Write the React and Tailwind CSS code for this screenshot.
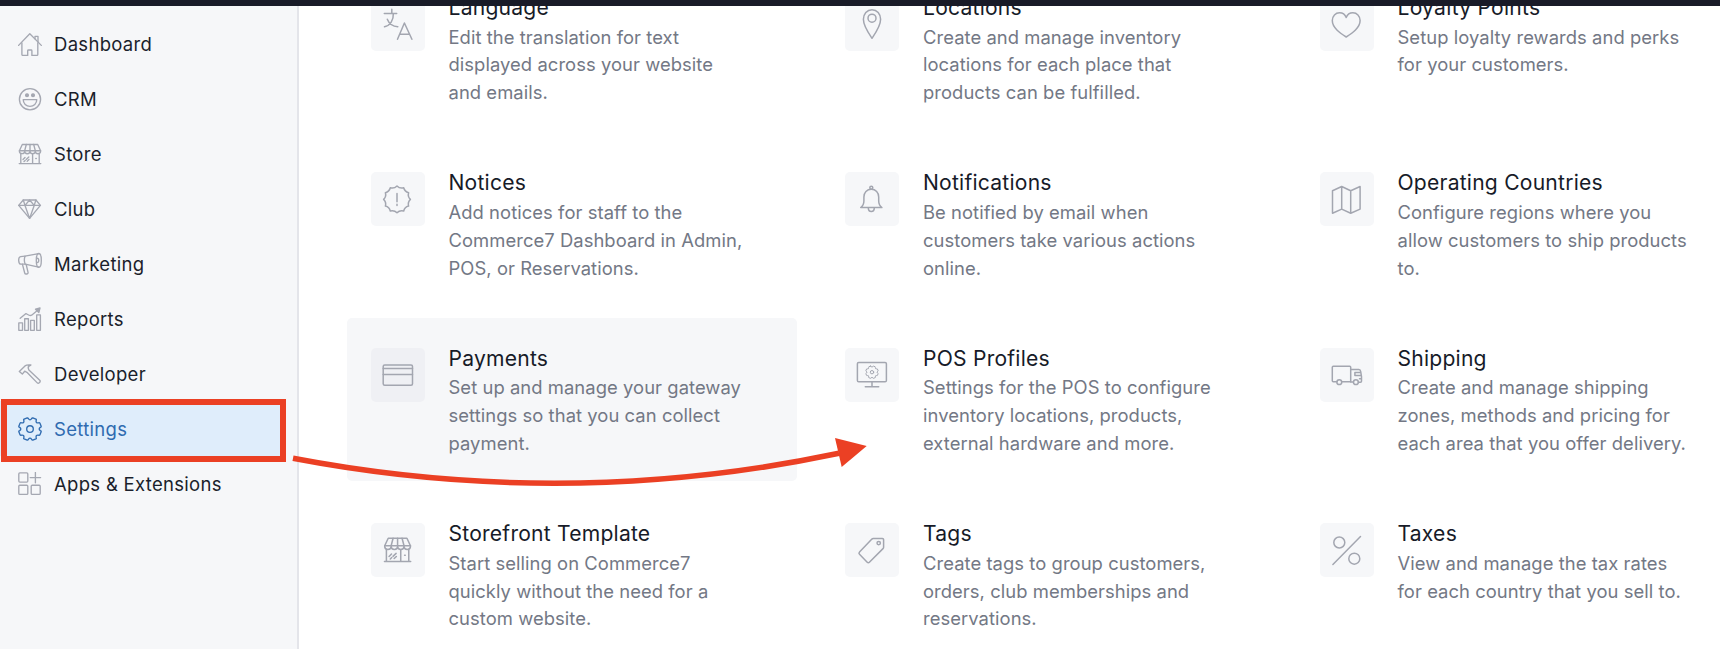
const polar = (cx, cy, r, deg) => {
  const a = ((deg - 90) * Math.PI) / 180;
  return `${(cx + r * Math.cos(a)).toFixed(2)} ${(cy + r * Math.sin(a)).toFixed(2)}`;
};

// Gear outline: eight rounded teeth with concave notches between them.
function gearPath(cx, cy, r) {
  let d = "";
  for (let i = 0; i < 8; i++) {
    const n = i * 45;
    d += `${i ? "L" : "M"}${polar(cx, cy, r, n - 14)}`;
    d += `Q${polar(cx, cy, r, n - 10)} ${polar(cx, cy, r * 0.91, n - 9)}`;
    d += `Q${polar(cx, cy, r * 0.7, n)} ${polar(cx, cy, r * 0.91, n + 9)}`;
    d += `Q${polar(cx, cy, r, n + 10)} ${polar(cx, cy, r, n + 14)}`;
    d += `L${polar(cx, cy, r, n + 31)}`;
  }
  return d + "Z";
}

// Seal outline: twelve points joined by shallow arcs.
function sealPath(cx, cy, r) {
  let d = `M${polar(cx, cy, r, 0)}`;
  for (let i = 0; i < 12; i++) {
    d += `Q${polar(cx, cy, r * 0.81, i * 30 + 15)} ${polar(cx, cy, r, i * 30 + 30)}`;
  }
  return d + "Z";
}

const StoreShape = () => (
  <>
    <path d="M4.3 2.5h15.4l2.9 6.2H1.4z" />
    <path d="M8.3 2.5 6.7 8.7M12 2.5v6.2M15.7 2.5l1.6 6.2" />
    <path d="M1.4 8.7v.6a2.65 2.4 0 0 0 5.3 0v-.6M6.7 9.3a2.65 2.4 0 0 0 5.3 0v-.6M12 9.3a2.65 2.4 0 0 0 5.3 0v-.6M17.3 9.3a2.65 2.4 0 0 0 5.3 0v-.6" />
    <path d="M2.8 11.8v9.7M21.2 11.8v9.7M1.2 21.6h21.6M14.6 12v9.6" />
    <path d="M5 17.5l2-2M6 19.6l1.2-1.2M8.2 17.4l2.6-2.4M9.2 19.2l1.8-1.7M17.8 16.5h.5" />
  </>
);

const navShapes = {
  Dashboard: (
    <>
      <path d="M.6 13.4 11.8 1.7 23.3 13.4" />
      <path d="M17 6.7V4.4h3v5.5" />
      <path d="M3.9 11v11.4a1 1 0 0 0 1 1h4.8v-4.6a.8.8 0 0 1 .8-.8h2.6a.8.8 0 0 1 .8.8v4.6h4.9a1 1 0 0 0 1-1V11" />
    </>
  ),
  CRM: (
    <>
      <circle cx="12" cy="12.2" r="10.6" />
      <circle cx="9" cy="8.2" r="1.4" fill="currentColor" />
      <circle cx="15" cy="8.2" r="1.4" fill="currentColor" />
      <path d="M5.2 12.6h13.6c0 4-3 6.7-6.8 6.7s-6.8-2.7-6.8-6.7z" />
    </>
  ),
  Store: <StoreShape />,
  Club: (
    <>
      <path d="M5.3 3h12.6l4.5 5.4L11.6 21.4.7 8.4z" />
      <path d="M.7 8.4h21.7M7 8.4l4.6 13 4.6-13M5.3 3 7 8.4 11.6 3l4.6 5.4L17.9 3" />
    </>
  ),
  Marketing: (
    <>
      <path d="M7 4.2 2.6 4.6C1.2 4.8.6 6.2.7 8.6c.1 2.2.9 3.5 2.2 3.5l4.3.1" />
      <path d="M7 4.2c-.9 2.6-.8 5.6.2 8L20.6 15.2M7 4.2 20.6 1.6" />
      <ellipse cx="20.8" cy="8.4" rx="2.5" ry="6.9" />
      <path d="M19 6.3c2-.6 2.6 4.2 0 4.3" />
      <path d="M4.4 12.2l2.3 8.8c.4 1.6 3.7 1.2 3.4-.4L8.2 12.5" />
    </>
  ),
  Reports: (
    <>
      <path d="M.8 15.9h3.7v7.4H.8zM6.7 11.7h3.7v11.6H6.7zM12.6 13.3h3.7v10h-3.7zM18.7 7.9h3.7v15.4h-3.7z" />
      <path d="M2.2 11.3 8 6.6c2.2 1 3.4 2.7 5.6 1.6L20 3" />
      <path d="M17.5 2.2 22 1l-1.2 4.5z" fill="currentColor" />
    </>
  ),
  Developer: (
    <path d="M1.3 9.4 7 3.9c2.2-1.6 4-1 5.9-.9-1.8.7-2.9 1.7-2.7 3l.7 1.9L22 18.6c1 1-1.5 3.4-2.5 2.5L8.9 10.3 6.7 9.2l-2.4 2.9z" />
  ),
  Settings: (
    <>
      <path d={gearPath(12, 12, 11.5)} />
      <circle cx="12" cy="12" r="3.3" />
    </>
  ),
  "Apps & Extensions": (
    <>
      <rect x=".8" y=".9" width="9" height="9.2" rx="1" />
      <rect x=".8" y="13.2" width="9" height="9.2" rx="1" />
      <rect x="13.2" y="13.2" width="9" height="9.2" rx="1" />
      <path d="M17.4.4v10.4M12.2 5.6h10.4" />
    </>
  ),
};

const NAV = Object.keys(navShapes);

const CARDS = [
  {
    title: "Language",
    text: "Edit the translation for text\ndisplayed across your website\nand emails.",
    icon: (
      <>
        <path d="M13.3 16.5h12.4M20.8 12.3v4.2M22.3 16.8c.4 6-3 11.8-8.8 13M16.3 22.2c1.7 4.3 5.5 7.2 10.5 7.5" />
        <path d="M26.5 42.2 33.4 26l7.5 16.2M28.9 37.2h9.5" />
      </>
    ),
  },
  {
    title: "Locations",
    text: "Create and manage inventory\nlocations for each place that\nproducts can be fulfilled.",
    icon: (
      <>
        <path d="M27 41.3C23 35.5 18.4 29 18.4 22.3c0-5.4 3.6-9.6 8.6-9.6s8.6 4.2 8.6 9.6c0 6.7-4.6 13.2-8.6 19z" />
        <circle cx="27" cy="21.2" r="4" />
      </>
    ),
  },
  {
    title: "Loyalty Points",
    text: "Setup loyalty rewards and perks\nfor your customers.",
    icon: (
      <path d="M26.2 40C20 36 12.3 30.8 12.3 23.6c0-4.8 3.3-7.8 7.2-7.8 3.4 0 5.7 2 6.7 4.8 1-2.8 3.3-4.8 6.7-4.8 3.9 0 7.2 3 7.2 7.8C40.1 30.8 32.4 36 26.2 40z" />
    ),
  },
  {
    title: "Notices",
    text: "Add notices for staff to the\nCommerce7 Dashboard in Admin,\nPOS, or Reservations.",
    icon: (
      <>
        <path d={sealPath(26, 27.4, 13.4)} />
        <path d="M26 21.5v8.2M26 32.3v1.2" />
      </>
    ),
  },
  {
    title: "Notifications",
    text: "Be notified by email when\ncustomers take various actions\nonline.",
    icon: (
      <>
        <circle cx="26.3" cy="15.8" r="1.5" />
        <path d="M15.7 35.5c2.4-1.7 3.2-3.5 3.2-6.5v-4c0-4.5 3-7.7 7.4-7.7s7.4 3.2 7.4 7.7v4c0 3 .8 4.8 3.2 6.5z" />
        <path d="M23.3 35.7c0 5 6 5 6 0" />
      </>
    ),
  },
  {
    title: "Operating Countries",
    text: "Configure regions where you\nallow customers to ship products\nto.",
    icon: (
      <path d="M12.5 18.7 21.7 14.5l9 4.2 9.4-4.2v22.6l-9.4 4.2-9-4.2-9.2 4.2zM21.7 14.5v22.6M30.7 18.7v22.6" />
    ),
  },
  {
    title: "Payments",
    active: true,
    text: "Set up and manage your gateway\nsettings so that you can collect\npayment.",
    icon: (
      <>
        <rect x="12.2" y="17" width="29.3" height="20.3" rx="1.5" />
        <path d="M12.2 20.6h29.3M12.2 26.4h29.3" />
      </>
    ),
  },
  {
    title: "POS Profiles",
    text: "Settings for the POS to configure\ninventory locations, products,\nexternal hardware and more.",
    icon: (
      <>
        <rect x="12.4" y="14.5" width="29" height="19.3" rx="1.3" />
        <path d="M27 34v4.5M20.3 38.7h13.4" />
        <path d={gearPath(27, 24.2, 6.3)} strokeWidth="1" />
        <circle cx="27" cy="24.2" r="1.7" strokeWidth="1" />
      </>
    ),
  },
  {
    title: "Shipping",
    text: "Create and manage shipping\nzones, methods and pricing for\neach area that you offer delivery.",
    icon: (
      <>
        <path d="M16.7 33.8h-3.4a1 1 0 0 1-1-1V19.3a1 1 0 0 1 1-1h16.4a1 1 0 0 1 1 1v14.5h-8.9" />
        <path d="M30.7 21.6h8.2c1.2 0 1.6.7 1.8 2l.8 5v4.6c0 .7-.5 1-1 1h-2M33.3 34h-2.6M40.7 24.4h-5.8v3.1H41M41.3 30.7h-1.8" />
        <circle cx="19.3" cy="34.2" r="2.4" />
        <circle cx="35.9" cy="34.2" r="2.4" />
      </>
    ),
  },
  {
    title: "Storefront Template",
    text: "Start selling on Commerce7\nquickly without the need for a\ncustom website.",
    icon: (
      <g transform="translate(12 12.2) scale(1.215)" strokeWidth="1.25">
        <StoreShape />
      </g>
    ),
  },
  {
    title: "Tags",
    text: "Create tags to group customers,\norders, club memberships and\nreservations.",
    icon: (
      <>
        <path d="M28.2 15.5h9.2a1.2 1.2 0 0 1 1.2 1.2v7.5c0 .6-.2 1-.6 1.4L24.4 39.3c-.7.7-1.5.7-2.2 0l-7.7-8c-.7-.7-.7-1.5 0-2.2L26.9 16.1c.4-.4.8-.6 1.3-.6z" />
        <circle cx="33.7" cy="20.1" r="1.7" />
      </>
    ),
  },
  {
    title: "Taxes",
    text: "View and manage the tax rates\nfor each country that you sell to.",
    icon: (
      <>
        <circle cx="19.3" cy="19.5" r="5.5" />
        <circle cx="34.3" cy="35.7" r="5.5" />
        <path d="M12.9 41.5 40.5 13.5" />
      </>
    ),
  },
];

function NavItem({ label }) {
  const active = label === "Settings";
  return (
    <a
      className={
        active
          ? "flex h-[55px] items-center gap-3 bg-[#dfedfb] pl-[18px] text-[#2f6bb0]"
          : "flex h-[55px] items-center gap-3 pl-[18px] text-[#1b1f2c]"
      }
    >
      <svg
        viewBox="0 0 24 24"
        className={active ? "size-6 shrink-0" : "size-6 shrink-0 text-[#a5a8b2]"}
        fill="none"
        stroke="currentColor"
        strokeWidth="1.35"
        strokeLinecap="round"
        strokeLinejoin="round"
      >
        {navShapes[label]}
      </svg>
      <span className="text-[18.5px] leading-[26px] tracking-[0.3px]">{label}</span>
    </a>
  );
}

function Card({ card }) {
  return (
    <article
      className={
        card.active
          ? "flex h-[163px] gap-6 rounded-[5px] bg-[#f6f7f9] pt-[24.6px] pl-6"
          : "flex h-[163px] gap-6 pt-[24.6px] pl-6"
      }
    >
      <div
        className={
          card.active
            ? "mt-[5px] size-[54px] shrink-0 rounded-[5px] bg-[#eff0f4]"
            : "mt-[5px] size-[54px] shrink-0 rounded-[5px] bg-[#f6f7f9]"
        }
      >
        <svg
          viewBox="0 0 54 54"
          className="size-[54px] text-[#a3a6b0]"
          fill="none"
          stroke="currentColor"
          strokeWidth="1.5"
          strokeLinecap="round"
          strokeLinejoin="round"
        >
          {card.icon}
        </svg>
      </div>
      <div className="whitespace-pre">
        <h3 className="text-[21.1px] leading-[31.8px] tracking-[0.22px] text-[#171b28]">{card.title}</h3>
        <p className="text-[18.4px] leading-[27.8px] tracking-[0.06px] text-[#737885]">{card.text}</p>
      </div>
    </article>
  );
}

export default function App() {
  return (
    <div className="relative flex h-[649px] w-[1720px] flex-col overflow-hidden bg-white font-['Inter',sans-serif]">
      <header className="z-10 h-1.5 shrink-0 bg-[#191b28]" />
      <div className="flex min-h-0 flex-1">
        <aside className="w-[299px] shrink-0 border-r-2 border-[#e4e5ea] bg-[#f6f7f9] pt-[10px] pr-[14px]">
          <nav className="flex flex-col">
            {NAV.map((label) => (
              <NavItem key={label} label={label} />
            ))}
          </nav>
        </aside>
        <main className="min-w-0 flex-1 overflow-hidden pl-[47.5px]">
          <div className="-mt-[38.8px] grid grid-cols-[450px_450px_450px] gap-x-[24.5px] gap-y-[12.4px]">
            {CARDS.map((card) => (
              <Card key={card.title} card={card} />
            ))}
          </div>
        </main>
      </div>
      <div className="absolute top-[398.5px] left-[1px] h-[63px] w-[285px] border-6 border-[#eb4024]" />
      <svg className="pointer-events-none absolute inset-0" width="1720" height="649" viewBox="0 0 1720 649" fill="none">
        <path d="M293 458.3Q567 510.5 839 453.3" stroke="#eb4024" strokeWidth="5.6" />
        <path d="M866.7 446 835 438l6.7 29z" fill="#eb4024" />
      </svg>
    </div>
  );
}
